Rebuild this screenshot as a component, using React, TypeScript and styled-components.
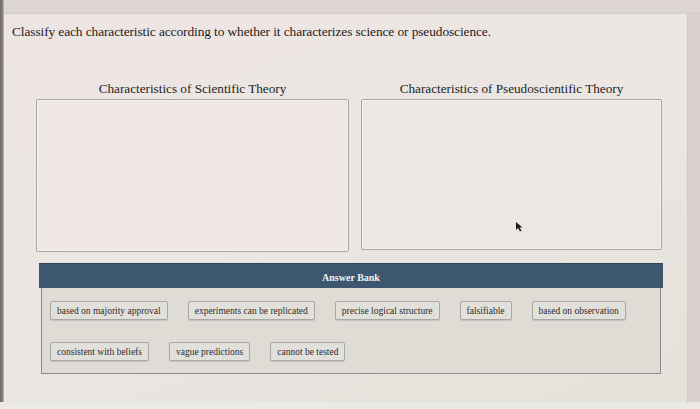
import React from 'react'
import styled, { createGlobalStyle } from 'styled-components'

const GlobalStyle = createGlobalStyle`
  html, body {
    margin: 0;
    padding: 0;
    background: #d8d1cf;
  }
  * { box-sizing: border-box; }
`

const Frame = styled.div`
  width: 700px;
  height: 409px;
  display: flex;
  flex-direction: column;
  overflow: hidden;
  font-family: 'Liberation Serif', 'Times New Roman', serif;
  background: linear-gradient(90deg, #6f6a6a 0, #8c8686 3px, #d8d1cf 4px);
`

const TopStrip = styled.div`
  height: 14px;
  margin-left: 4px;
  background: #ddd5d3;
  border-bottom: 1px solid #d2cbc9;
`

const Panel = styled.div`
  position: relative;
  flex: 1;
  margin-left: 4px;
  width: 684px;
  padding: 10px 0 0 8px;
  background: linear-gradient(160deg, #eee5e3 0%, #ebe6e2 45%, #e4e2db 100%);
  border-right: 1px solid #cfcbc5;
`

const BottomStrip = styled.div`
  height: 7px;
  background: #ebe9e5;
`

const Heading = styled.div`
  font-size: 13.4px;
  color: #1f1b1c;
  letter-spacing: -0.1px;
`

const Columns = styled.div`
  display: grid;
  grid-template-columns: 313px 301px;
  column-gap: 12px;
  margin: 41px 0 0 24px;
`

const Column = styled.div`
  display: flex;
  flex-direction: column;
  align-items: stretch;
`

const ColumnTitle = styled.div`
  text-align: center;
  font-size: 13.2px;
  color: #221e1f;
  height: 18px;
  line-height: 16px;
`

const DropBox = styled.div<{ $h: number; $tone: string }>`
  height: ${({ $h }) => $h}px;
  background: ${({ $tone }) => $tone};
  border: 1px solid #a9a5a2;
  border-radius: 2px;
  box-shadow: inset 0 0 0 1px rgba(255, 255, 255, 0.4);
`

const Bank = styled.div`
  width: 624px;
  margin: 11px 0 0 27px;
`

const BankHeader = styled.div`
  height: 25px;
  background: #3e5770;
  color: #f2f2f2;
  font-size: 10px;
  font-weight: bold;
  text-align: center;
  line-height: 27px;
  border-top: 1px solid #2f4257;
`

const BankBody = styled.div`
  margin: 0 2px;
  min-height: 86px;
  padding: 13px 8px 12px 8px;
  display: flex;
  flex-wrap: wrap;
  column-gap: 20px;
  row-gap: 22px;
  background: #dedcd5;
  border: 1px solid #8f8d88;
  border-top: none;
`

const Chip = styled.div`
  height: 19px;
  padding: 0 6px;
  display: flex;
  align-items: center;
  font-size: 9.5px;
  color: #2f2b2c;
  background: #e2e0db;
  border: 1px solid #aaa8a3;
  border-radius: 2px;
  box-shadow: 0 1px 1px rgba(0, 0, 0, 0.12);
  white-space: nowrap;
`

const Cursor = styled.svg`
  position: absolute;
  left: 511px;
  top: 207px;
`

const answers = [
  'based on majority approval',
  'experiments can be replicated',
  'precise logical structure',
  'falsifiable',
  'based on observation',
  'consistent with beliefs',
  'vague predictions',
  'cannot be tested',
]

export default function App() {
  return (
    <Frame>
      <GlobalStyle />
      <TopStrip />
      <Panel>
        <Heading>Classify each characteristic according to whether it characterizes science or pseudoscience.</Heading>
        <Columns>
          <Column>
            <ColumnTitle>Characteristics of Scientific Theory</ColumnTitle>
            <DropBox $h={153} $tone="#eee7e4" />
          </Column>
          <Column>
            <ColumnTitle>Characteristics of Pseudoscientific Theory</ColumnTitle>
            <DropBox $h={151} $tone="#ebe7e2" />
          </Column>
        </Columns>
        <Bank>
          <BankHeader>Answer Bank</BankHeader>
          <BankBody>
            {answers.map((a) => (
              <Chip key={a}>{a}</Chip>
            ))}
          </BankBody>
        </Bank>
        <Cursor width="9" height="11" viewBox="0 0 9 11">
          <path d="M1 1 L1 9 L3 7 L5 10.5 L6.5 9.8 L4.6 6.6 L7.5 6.4 Z" fill="#1e1c1c" />
        </Cursor>
      </Panel>
      <BottomStrip />
    </Frame>
  )
}
